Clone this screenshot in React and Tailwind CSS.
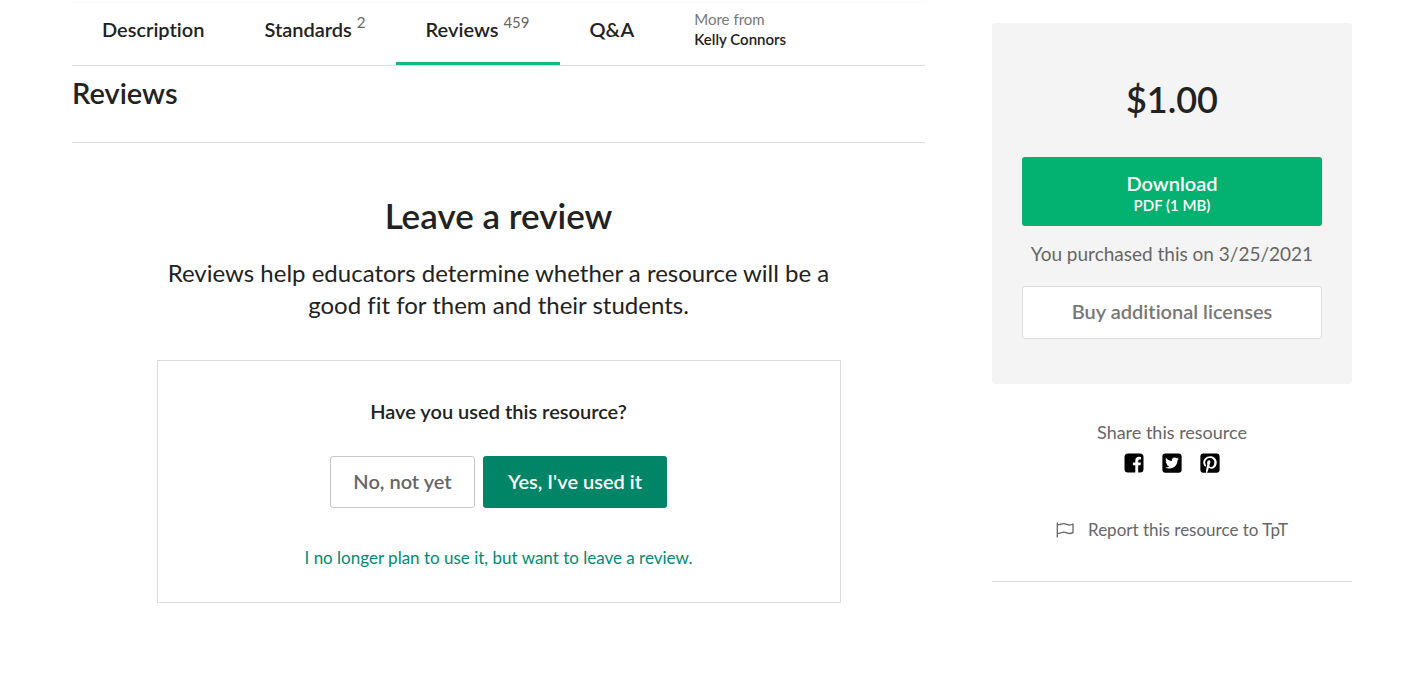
import { FaSquareTwitter, FaSquarePinterest } from "react-icons/fa6";

const tabs = [
  { name: "Description" },
  { name: "Standards", count: 2 },
  { name: "Reviews", count: 459, active: true },
  { name: "Q&A" },
];

function FacebookIcon() {
  return (
    <svg viewBox="-1 -1 22 22" className="size-[22px]" fill="currentColor" aria-hidden="true">
      <path d="M4 0.5H16A3.5 3.5 0 0 1 19.5 4V16A3.5 3.5 0 0 1 16 19.5H14.2V12.2H16.5L16.9 9.4H14.2V7.8C14.2 6.9 14.6 6.4 15.6 6.4H17V3.9C16.5 3.8 15.8 3.7 15 3.7C12.8 3.7 11.3 5 11.3 7.4V9.4H8.9V12.2H11.3V19.5H4A3.5 3.5 0 0 1 0.5 16V4A3.5 3.5 0 0 1 4 0.5Z" />
    </svg>
  );
}

function FlagIcon() {
  return (
    <svg viewBox="0 0 18 16" className="h-4 w-[18px]" fill="none" stroke="currentColor" strokeWidth="1.3" aria-hidden="true">
      <path d="M1.3 0.5V15.5" />
      <path d="M1.3 2.6H3C5 2.6 5.6 1.6 7.8 1.6C10.3 1.6 11 3 13.4 3C15 3 16 2.5 17 2.1V10.6C16 11.1 15 11.5 13.4 11.5C11 11.5 10.3 10.2 7.8 10.2C5.6 10.2 5 11.3 3 11.3H1.3" />
    </svg>
  );
}

function Tabs() {
  return (
    <nav className="flex h-16 border-t border-b border-t-gray-50 border-b-[#dcdcdc]">
      {tabs.map((tab) => (
        <a
          key={tab.name}
          href="#"
          className={`flex items-start border-b-[3px] px-[30px] pt-[14px] text-xl leading-6 font-semibold ${
            tab.active ? "border-[#0eb97b]" : "border-transparent"
          }`}
        >
          {tab.name}
          {tab.count && (
            <span className="ml-[5px] text-[15px] leading-[10px] font-normal text-[#666]">{tab.count}</span>
          )}
        </a>
      ))}
      <a href="#" className="ml-[30px] pt-[6px] text-[15px] leading-5">
        <span className="block text-[#777]">More from</span>
        <span className="block font-semibold">Kelly Connors</span>
      </a>
    </nav>
  );
}

function LeaveReview() {
  return (
    <section className="mx-auto max-w-[684px] pt-[52px] text-center">
      <h2 className="text-[35px] leading-10 font-semibold">Leave a review</h2>
      <p className="mt-[22px] text-2xl leading-8">
        Reviews help educators determine whether a resource will be a good fit for them and their students.
      </p>
      <div className="mt-[39px] border border-[#dcdcdc] pt-[38px] pb-8">
        <h3 className="text-xl leading-6 font-semibold">Have you used this resource?</h3>
        <div className="mt-[33px] flex justify-center gap-2">
          <button className="h-[52px] w-[145px] rounded-[3px] border border-[#c8c8c8] pb-[3px] text-xl font-semibold text-[#666]">
            No, not yet
          </button>
          <button className="h-[52px] w-[184px] rounded-[3px] bg-[#008566] pb-[3px] text-xl font-semibold text-white">
            Yes, I've used it
          </button>
        </div>
        <a href="#" className="mt-[38px] block text-[17px] leading-6 text-[#008b72]">
          I no longer plan to use it, but want to leave a review.
        </a>
      </div>
    </section>
  );
}

function Sidebar() {
  return (
    <aside className="w-[360px] shrink-0 pt-[23px] text-center text-[#666]">
      <div className="rounded bg-[#f4f4f4] px-[30px] pt-[52px] pb-[45px]">
        <div className="text-4xl leading-[48px] font-semibold text-[#222]">$1.00</div>
        <button className="mt-[34px] h-[69px] w-full rounded-[3px] bg-[#03b270] pt-[2px] font-semibold text-white">
          <span className="block text-xl leading-6">Download</span>
          <span className="block text-[15px] leading-5">PDF (1 MB)</span>
        </button>
        <p className="mt-4 text-[19px] leading-6 whitespace-nowrap">You purchased this on 3/25/2021</p>
        <button className="mt-5 h-[53px] w-full rounded-[3px] border border-[#dcdcdc] bg-white pb-[3px] text-xl font-semibold text-[#777]">
          Buy additional licenses
        </button>
      </div>

      {/* Share */}
      <div className="mt-9 text-lg leading-6">Share this resource</div>
      <div className="mt-2 flex justify-center gap-4 text-black">
        <a href="#" aria-label="Facebook"><FacebookIcon /></a>
        <a href="#" aria-label="Twitter"><FaSquareTwitter className="size-[22px]" /></a>
        <a href="#" aria-label="Pinterest"><FaSquarePinterest className="size-[22px]" /></a>
      </div>

      {/* Report */}
      <div className="mt-11 border-b border-[#dcdcdc] pb-[39px]">
        <a href="#" className="flex items-center justify-center gap-[14px] text-[17px] leading-6">
          <FlagIcon />
          Report this resource to TpT
        </a>
      </div>
    </aside>
  );
}

export default function App() {
  return (
    <div className="flex gap-[67px] bg-white pr-[68px] pl-[72px] font-['Lato',sans-serif] text-[#222] [font-variant-ligatures:none]">
      <main className="min-w-0 flex-1 pt-[2px]">
        <Tabs />
        <h1 className="border-b border-[#dcdcdc] pt-[9px] pb-[31px] text-[29px] leading-9 font-semibold">Reviews</h1>
        <LeaveReview />
      </main>
      <Sidebar />
    </div>
  );
}
